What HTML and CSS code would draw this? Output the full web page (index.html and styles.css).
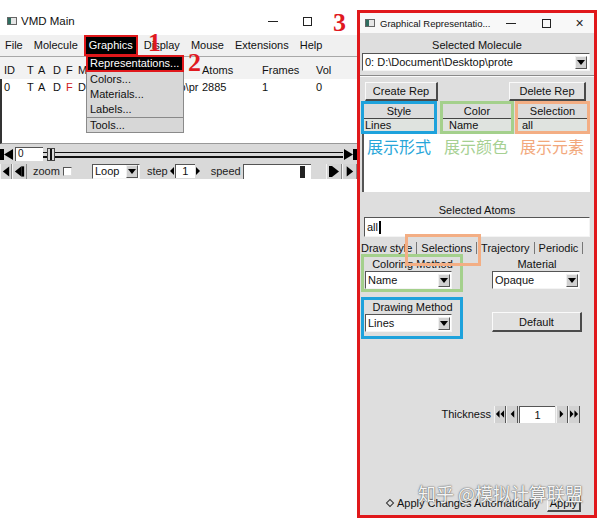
FILE: index.html
```html
<!DOCTYPE html>
<html lang="zh">

<head>
    <meta charset="UTF-8">
    <meta name="viewport" content="width=device-width, initial-scale=1.0">
    <title>VMD Graphical Representations</title>

    <link rel="stylesheet" href="styles.css">

</head>

<body>
    <div class="screen">

        <!-- VMD Main window -->
        <div class="main-win">
            <div class="titlebar">
                <span class="app-icon"></span>
                <span class="win-title">VMD Main</span>
                <span class="win-ctrl ctrl-min"></span>
                <span class="win-ctrl ctrl-max"></span>
            </div>

            <div class="menubar">
                <span class="menu-item">File</span>
                <span class="menu-item">Molecule</span>
                <span class="menu-item menu-open">Graphics</span>
                <span class="menu-item">Display</span>
                <span class="menu-item">Mouse</span>
                <span class="menu-item">Extensions</span>
                <span class="menu-item">Help</span>
            </div>

            <div class="mol-head">
                <span class="c-id">ID</span><span class="c-t">T</span><span class="c-a">A</span><span class="c-d">D</span><span class="c-f">F</span><span class="c-name">Molecule</span><span class="c-atoms">Atoms</span><span class="c-frames">Frames</span><span class="c-vol">Vol</span>
            </div>

            <div class="mol-list">
                <div class="mol-row">
                    <span class="c-id">0</span><span class="c-t">T</span><span class="c-a">A</span><span class="c-d">D</span><span class="c-f flag-red">F</span><span class="c-name">D:\Document\Desktop\pr</span><span class="c-atoms">2885</span><span class="c-frames">1</span><span class="c-vol">0</span>
                </div>
            </div>

            <!-- Animation controls -->
            <div class="anim-bar">
                <div class="anim-row">
                    <span class="icon-btn">
                        <svg width="14" height="14" viewBox="0 0 14 14"><rect x="0" y="2" width="4" height="11" fill="#000"/><polygon points="13,2 4,7.5 13,13" fill="#000"/></svg>
                    </span>
                    <span class="frame-box">0</span>
                    <div class="frame-slider"><span class="slider-thumb"></span></div>
                    <span class="icon-btn">
                        <svg width="14" height="14" viewBox="0 0 14 14"><polygon points="1,2 10,7.5 1,13" fill="#000"/><rect x="10" y="2" width="4" height="11" fill="#000"/></svg>
                    </span>
                </div>
                <div class="anim-row">
                    <span class="play-btn">
                        <svg width="11" height="14" viewBox="0 0 11 14"><polygon points="9,2 2,7.5 9,13" fill="#000"/></svg>
                    </span>
                    <span class="play-btn wide">
                        <svg width="14" height="14" viewBox="0 0 14 14"><polygon points="9,2 2,7.5 9,13" fill="#000"/><rect x="9" y="2" width="3" height="11" fill="#000"/></svg>
                    </span>
                    <span class="anim-label zoom-label">zoom</span>
                    <span class="check"></span>
                    <div class="select loop-select">
                        <span class="select-text">Loop</span>
                        <span class="select-arrow"></span>
                    </div>
                    <span class="anim-label step-label">step</span>
                    <span class="spin-arrow">
                        <svg width="5" height="12" viewBox="0 0 5 12"><polygon points="5,2 1,6 5,10" fill="#000"/></svg>
                    </span>
                    <span class="step-box">1</span>
                    <span class="spin-arrow">
                        <svg width="5" height="12" viewBox="0 0 5 12"><polygon points="0,2 4,6 0,10" fill="#000"/></svg>
                    </span>
                    <span class="anim-label speed-label">speed</span>
                    <div class="speed-slider"><span class="speed-thumb"></span></div>
                    <span class="play-btn end-btn">
                        <svg width="14" height="14" viewBox="0 0 14 14"><rect x="2" y="2" width="3" height="11" fill="#000"/><polygon points="5,2 12,7.5 5,13" fill="#000"/></svg>
                    </span>
                    <span class="play-btn wide">
                        <svg width="14" height="14" viewBox="0 0 14 14"><polygon points="4,2 11,7.5 4,13" fill="#000"/></svg>
                    </span>
                </div>
            </div>

            <!-- Graphics dropdown -->
            <div class="dropdown">
                <div class="drop-item drop-active">Representations...</div>
                <div class="drop-item">Colors...</div>
                <div class="drop-item">Materials...</div>
                <div class="drop-item">Labels...</div>
                <div class="drop-sep"></div>
                <div class="drop-item">Tools...</div>
            </div>
        </div>

        <!-- Graphical Representations window -->
        <div class="rep-win">
            <div class="rep-titlebar">
                <span class="app-icon"></span>
                <span class="rep-title">Graphical Representatio...</span>
                <span class="win-ctrl ctrl-min"></span>
                <span class="win-ctrl ctrl-max"></span>
                <span class="win-ctrl ctrl-close">×</span>
            </div>

            <div class="rep-panel">
                <div class="field-label">Selected Molecule</div>
                <div class="select mol-select">
                    <span class="select-text">0: D:\Document\Desktop\prote</span>
                    <span class="select-arrow"></span>
                </div>
                <div class="sep"></div>

                <div class="rep-btns">
                    <button class="tk-btn">Create Rep</button>
                    <button class="tk-btn delete-btn">Delete Rep</button>
                </div>

                <div class="rep-table">
                    <div class="rep-col col-style">
                        <div class="col-head">Style</div>
                        <div class="col-cell">Lines</div>
                    </div>
                    <div class="rep-col col-color">
                        <div class="col-head">Color</div>
                        <div class="col-cell">Name</div>
                    </div>
                    <div class="rep-col col-sel">
                        <div class="col-head">Selection</div>
                        <div class="col-cell">all</div>
                    </div>
                </div>

                <div class="rep-list">
                    <span class="note note-style">展示形式</span>
                    <span class="note note-color">展示颜色</span>
                    <span class="note note-sel">展示元素</span>
                </div>

                <div class="field-label atoms-label">Selected Atoms</div>
                <div class="atom-input">all<span class="caret"></span></div>

                <div class="tabs">
                    <span class="tab">Draw style</span>
                    <span class="tab">Selections</span>
                    <span class="tab">Trajectory</span>
                    <span class="tab">Periodic</span>
                </div>

                <div class="opts">
                    <div class="opt-left">
                        <div class="opt-box box-green">
                            <div class="opt-label">Coloring Method</div>
                            <div class="select opt-select">
                                <span class="select-text">Name</span>
                                <span class="select-arrow"></span>
                            </div>
                        </div>
                        <div class="opt-box box-blue">
                            <div class="opt-label">Drawing Method</div>
                            <div class="select opt-select">
                                <span class="select-text">Lines</span>
                                <span class="select-arrow"></span>
                            </div>
                        </div>
                    </div>
                    <div class="opt-right">
                        <div class="opt-label">Material</div>
                        <div class="select mat-select">
                            <span class="select-text">Opaque</span>
                            <span class="select-arrow"></span>
                        </div>
                        <button class="tk-btn default-btn">Default</button>
                    </div>
                </div>

                <div class="thickness">
                    <span class="thick-label">Thickness</span>
                    <span class="arrow-btn">
                        <svg width="11" height="14" viewBox="0 0 11 14"><polygon points="5,3 1,7 5,11" fill="#000"/><polygon points="10,3 6,7 10,11" fill="#000"/></svg>
                    </span>
                    <span class="arrow-btn">
                        <svg width="11" height="14" viewBox="0 0 11 14"><polygon points="8,3 4,7 8,11" fill="#000"/></svg>
                    </span>
                    <span class="thick-box">1</span>
                    <span class="arrow-btn">
                        <svg width="11" height="14" viewBox="0 0 11 14"><polygon points="3,3 7,7 3,11" fill="#000"/></svg>
                    </span>
                    <span class="arrow-btn">
                        <svg width="11" height="14" viewBox="0 0 11 14"><polygon points="1,3 5,7 1,11" fill="#000"/><polygon points="6,3 10,7 6,11" fill="#000"/></svg>
                    </span>
                </div>

                <div class="apply-row">
                    <span class="radio"></span>
                    <span class="apply-auto">Apply Changes Automatically</span>
                    <button class="tk-btn apply-btn">Apply</button>
                </div>

                <!-- annotation overlays -->
                <div class="tab-mark"></div>
            </div>
        </div>

        <span class="mark mark-1">1</span>
        <span class="mark mark-2">2</span>
        <span class="mark mark-3">3</span>
        <div class="watermark">知乎 @模拟计算联盟</div>
    </div>
</body>

</html>
```

FILE: styles.css
```css
* {
    box-sizing: border-box;
}

body {
    margin: 0;
    background: #fff;
    font-family: "Liberation Sans", Arial, sans-serif;
    font-size: 11px;
    color: #111;
}

.screen {
    position: relative;
    width: 600px;
    height: 519px;
    display: flex;
    align-items: flex-start;
    overflow: hidden;
}

/* ---------- window chrome ---------- */
.app-icon {
    width: 10px;
    height: 8px;
    border: 1px solid #666;
    background: linear-gradient(to right, #2f6e60 0 40%, #e6e6e6 40%);
}

.win-ctrl {
    display: inline-block;
}

.ctrl-min {
    width: 10px;
    height: 1px;
    background: #222;
}

.ctrl-max {
    width: 9px;
    height: 9px;
    border: 1px solid #222;
}

/* ---------- VMD Main ---------- */
.main-win {
    position: relative;
    width: 357px;
    height: 178px;
    flex-shrink: 0;
}

.titlebar {
    height: 35px;
    display: flex;
    align-items: center;
    padding: 7px 0 0 7px;
    background: #fff;
}

.win-title {
    margin-left: 4px;
    font-size: 11.5px;
}

.titlebar .ctrl-min {
    margin-left: 193px;
}

.titlebar .ctrl-max {
    margin-left: 25px;
}

.menubar {
    height: 22px;
    display: flex;
    align-items: stretch;
    background: #f0f0f0;
    border-bottom: 1px solid #a8a8a8;
}

.menu-item {
    padding: 0 5px;
    margin-right: 1px;
    line-height: 21px;
}

.menu-open {
    background: #000;
    color: #fff;
    border: 2px solid #e0181b;
    line-height: 17px;
    padding: 0 3px;
}

.mol-head,
.mol-row {
    display: flex;
    padding-left: 4px;
    white-space: nowrap;
}

.mol-head {
    height: 22px;
    align-items: flex-end;
    padding-bottom: 3px;
    background: #f2f2f2;
}

.mol-list {
    height: 65px;
    background: #fff;
    border-left: 2px solid #333;
    border-bottom: 1px solid #999;
}

.mol-row {
    padding-top: 2px;
    padding-left: 2px;
}

.c-id { width: 23px; }
.c-t { width: 11px; }
.c-a { width: 15px; }
.c-d { width: 13px; }
.c-f { width: 12px; }
.c-name { width: 124px; overflow: hidden; }
.c-atoms { width: 60px; }
.c-frames { width: 54px; }
.c-vol { width: 30px; }

.flag-red {
    color: #d02020;
}

.anim-bar {
    height: 35px;
    background: #d9d9d9;
    padding-top: 2px;
}

.anim-row {
    display: flex;
    align-items: center;
    height: 16px;
    margin-bottom: 1px;
}

.icon-btn {
    width: 14px;
    height: 14px;
    display: flex;
}

.frame-box {
    width: 28px;
    height: 14px;
    margin-left: 1px;
    background: #fff;
    border-top: 1px solid #555;
    border-left: 1px solid #555;
    font-size: 10px;
    line-height: 12px;
    padding-left: 2px;
}

.frame-slider {
    flex: 1;
    height: 14px;
    display: flex;
    align-items: center;
    padding-left: 4px;
    background:
        linear-gradient(#111, #111) 0 5px / 100% 1px no-repeat,
        linear-gradient(#111, #111) 0 9px / 100% 2px no-repeat;
}

.slider-thumb {
    width: 8px;
    height: 13px;
    background: #d9d9d9;
    border: 1px solid #444;
    box-shadow: inset 2px 0 0 #d9d9d9, inset -2px 0 0 #d9d9d9, inset 0 0 0 6px #111;
}

.play-btn {
    height: 15px;
    width: 12px;
    display: flex;
    align-items: center;
    justify-content: center;
    background: #d4d4d4;
    border-right: 1px solid #888;
    border-left: 1px solid #f4f4f4;
}

.play-btn.wide {
    width: 15px;
}

.end-btn {
    margin-left: auto;
    width: 16px;
}

.anim-label {
    color: #222;
}

.zoom-label {
    margin-left: 6px;
}

.check {
    width: 9px;
    height: 9px;
    margin-left: 3px;
    background: #fff;
    border: 1px solid #555;
    border-right-color: #ddd;
    border-bottom-color: #ddd;
}

.loop-select {
    width: 48px;
    height: 15px;
    margin-left: 20px;
}

.step-label {
    margin-left: 7px;
}

.spin-arrow {
    width: 5px;
    height: 14px;
    display: flex;
    align-items: center;
    margin-left: 1px;
}

.step-box {
    width: 20px;
    height: 14px;
    margin-left: 1px;
    background: #fff;
    border-top: 1px solid #555;
    border-left: 1px solid #555;
    text-align: center;
    line-height: 12px;
}

.speed-label {
    margin-left: 10px;
}

.speed-slider {
    width: 68px;
    height: 15px;
    margin-left: 2px;
    background: #fff;
    border-top: 1px solid #555;
    border-left: 1px solid #555;
    display: flex;
    justify-content: flex-end;
    padding: 1px 6px 0 0;
}

.speed-thumb {
    width: 5px;
    height: 12px;
    background: #222;
}

/* dropdown menu */
.dropdown {
    position: absolute;
    left: 86px;
    top: 55px;
    width: 98px;
    height: 78px;
    background: #d7d7d7;
    border: 1px solid #8a8a8a;
    border-top: none;
}

.drop-item {
    height: 15px;
    line-height: 15px;
    padding-left: 3px;
}

.drop-active {
    height: 17px;
    line-height: 13px;
    background: #000;
    color: #fff;
    border: 2px solid #e0181b;
    margin: 0 -1px;
    padding-left: 2px;
}

.drop-sep {
    height: 1px;
    background: #888;
}

/* ---------- Graphical Representations ---------- */
.rep-win {
    width: 240px;
    height: 508px;
    margin-top: 10px;
    border: 3px solid #e0181b;
    display: flex;
    flex-direction: column;
    flex-shrink: 0;
}

.rep-titlebar {
    height: 20px;
    display: flex;
    align-items: center;
    padding-left: 5px;
    background: #f8f8f8;
}

.rep-title {
    margin-left: 5px;
    font-size: 9.5px;
}

.rep-titlebar .ctrl-min {
    margin-left: 16px;
}

.rep-titlebar .ctrl-max {
    margin-left: 26px;
}

.ctrl-close {
    margin-left: 24px;
    font-size: 14px;
    line-height: 14px;
    color: #222;
}

.rep-panel {
    position: relative;
    flex: 1;
    display: flex;
    flex-direction: column;
    background: #dedede;
}

.field-label {
    height: 14px;
    margin-top: 5px;
    text-align: center;
    line-height: 14px;
}

.select {
    display: flex;
    align-items: center;
    background: #fff;
    border: 1px solid #555;
    border-right-color: #f4f4f4;
    border-bottom-color: #f4f4f4;
}

.select-text {
    flex: 1;
    padding-left: 2px;
    white-space: nowrap;
    overflow: hidden;
}

.select-arrow {
    width: 12px;
    height: 13px;
    margin-right: 1px;
    background: #d0d0d0;
    border: 1px solid #f0f0f0;
    border-right-color: #555;
    border-bottom-color: #555;
    position: relative;
}

.select-arrow::after {
    content: "";
    position: absolute;
    left: 1px;
    top: 3px;
    border-left: 4px solid transparent;
    border-right: 4px solid transparent;
    border-top: 5px solid #000;
}

.mol-select {
    height: 18px;
    margin: 1px 4px 0 2px;
}

.mol-select .select-arrow {
    margin-right: 2px;
}

.sep {
    height: 2px;
    margin-top: 4px;
    border-top: 1px solid #8a8a8a;
    border-bottom: 1px solid #fafafa;
}

.rep-btns {
    display: flex;
    justify-content: space-between;
    margin-top: 5px;
    padding: 0 8px 0 5px;
}

.tk-btn {
    height: 19px;
    padding: 0;
    font-family: inherit;
    font-size: 11px;
    color: #111;
    background: #e0e0e0;
    border-style: solid;
    border-width: 1px 2px 2px 1px;
    border-color: #fafafa #4a4a4a #4a4a4a #fafafa;
}

.rep-btns .tk-btn {
    width: 73px;
}

.rep-btns .delete-btn {
    width: 77px;
}

.rep-table {
    display: flex;
    padding-left: 1px;
}

.rep-col {
    height: 33px;
    border: 3px solid;
}

.col-style {
    width: 76px;
    border-color: #1ea2dc;
}

.col-color {
    width: 74px;
    margin-left: 3px;
    border-color: #a4d08c;
}

.col-sel {
    width: 75px;
    margin-left: 1px;
    border-color: #f3ae84;
}

.col-head {
    height: 14px;
    line-height: 14px;
    text-align: center;
    background: #dcdcdc;
}

.col-cell {
    height: 13px;
    line-height: 12px;
    background: #dfe3df;
    border-top: 1px solid #444;
    padding-left: 1px;
}

.col-color .col-cell {
    padding-left: 6px;
}

.col-sel .col-cell {
    padding-left: 4px;
}

.rep-list {
    height: 58px;
    margin: 0 4px 0 2px;
    background: #fff;
    border-left: 2px solid #555;
    display: flex;
    align-items: flex-start;
    padding-top: 3px;
    font-family: "Noto Sans CJK SC", sans-serif;
    font-size: 16px;
    line-height: 18px;
}

.note-style {
    margin-left: 3px;
    color: #27a6d9;
}

.note-color {
    margin-left: 13px;
    color: #a6d092;
}

.note-sel {
    margin-left: 12px;
    color: #f2a87c;
}

.atoms-label {
    margin-top: 11px;
}

.atom-input {
    height: 20px;
    margin: 0 4px 0 4px;
    background: #fff;
    border: 1px solid #555;
    border-right-color: #f4f4f4;
    border-bottom-color: #f4f4f4;
    padding-left: 2px;
    line-height: 18px;
    display: flex;
    align-items: center;
}

.caret {
    width: 2px;
    height: 13px;
    margin-left: 1px;
    background: #000;
}

.tabs {
    height: 12px;
    margin-top: 5px;
    display: flex;
    line-height: 12px;
    white-space: nowrap;
}

.tab {
    padding: 0 4px 0 4px;
    border-right: 1px solid #777;
}

.tab:first-child {
    padding-left: 1px;
}

.opts {
    display: flex;
}

.opt-left {
    width: 102px;
    margin-left: 1px;
}

.opt-box {
    border: 3px solid;
    padding-left: 1px;
}

.box-green {
    height: 38px;
    border-color: #a4d08c;
}

.box-blue {
    height: 42px;
    margin-top: 5px;
    border-color: #1ea2dc;
}

.opt-label {
    height: 14px;
    line-height: 14px;
    text-align: center;
}

.opt-select {
    width: 87px;
    height: 18px;
}

.opt-right {
    width: 90px;
    margin-left: 29px;
    padding-top: 3px;
    display: flex;
    flex-direction: column;
}

.mat-select {
    width: 88px;
    height: 18px;
}

.default-btn {
    width: 90px;
    height: 20px;
    margin-top: 23px;
}

.thickness {
    display: flex;
    align-items: center;
    justify-content: flex-end;
    height: 18px;
    margin-top: 66px;
    padding-right: 14px;
}

.thick-label {
    margin-right: 3px;
}

.arrow-btn {
    width: 12px;
    height: 17px;
    display: flex;
    align-items: center;
    justify-content: center;
    background: #d2d2d2;
    border-right: 1px solid #555;
    border-left: 1px solid #f4f4f4;
}

.thick-box {
    width: 36px;
    height: 17px;
    margin: 0 1px;
    background: #fff;
    border-top: 1px solid #555;
    border-left: 1px solid #555;
    text-align: center;
    line-height: 16px;
}

.apply-row {
    margin-top: auto;
    height: 21px;
    padding: 0 13px 3px 27px;
    display: flex;
    align-items: center;
}

.radio {
    width: 6px;
    height: 6px;
    border: 1px solid #333;
    transform: rotate(45deg);
    margin-right: 4px;
}

.apply-btn {
    margin-left: auto;
    width: 34px;
    height: 18px;
}

/* ---------- annotations ---------- */
.tab-mark {
    position: absolute;
    left: 45px;
    top: 201px;
    width: 76px;
    height: 32px;
    border: 3px solid #f3ae84;
}

.mark {
    position: absolute;
    font-family: "Liberation Serif", "Times New Roman", serif;
    font-weight: bold;
    font-size: 26px;
    line-height: 26px;
    color: #e0191f;
}

.mark-1 {
    left: 148px;
    top: 30px;
}

.mark-2 {
    left: 188px;
    top: 50px;
}

.mark-3 {
    left: 333px;
    top: 10px;
}

.watermark {
    position: absolute;
    left: 418px;
    top: 481px;
    font-family: "Noto Sans CJK SC", sans-serif;
    font-size: 18px;
    line-height: 24px;
    color: rgba(255, 255, 255, 0.95);
    text-shadow: 0 0 1px #555, 0 0 2px rgba(0, 0, 0, 0.5);
    white-space: nowrap;
}
```
